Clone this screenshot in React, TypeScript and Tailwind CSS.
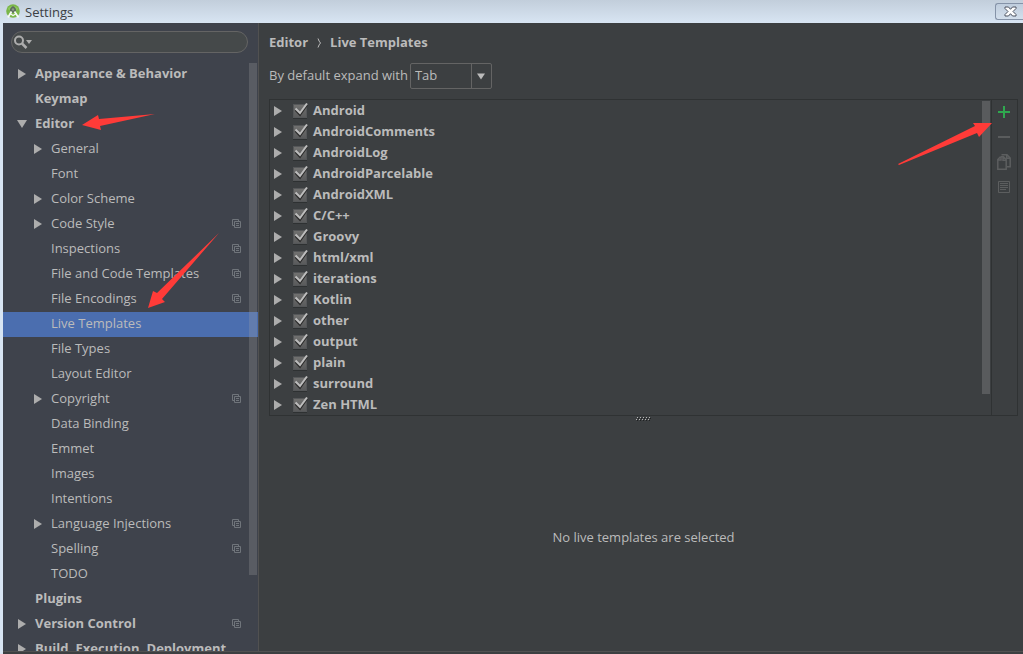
import React from "react";
import clsx from "clsx";

interface TreeItem {
  label: string;
  level: 0 | 1;
  arrow?: "open" | "closed";
  shared?: boolean;
  selected?: boolean;
}

const treeItems: TreeItem[] = [
  { label: "Appearance & Behavior", level: 0, arrow: "closed" },
  { label: "Keymap", level: 0 },
  { label: "Editor", level: 0, arrow: "open" },
  { label: "General", level: 1, arrow: "closed" },
  { label: "Font", level: 1 },
  { label: "Color Scheme", level: 1, arrow: "closed" },
  { label: "Code Style", level: 1, arrow: "closed", shared: true },
  { label: "Inspections", level: 1, shared: true },
  { label: "File and Code Templates", level: 1, shared: true },
  { label: "File Encodings", level: 1, shared: true },
  { label: "Live Templates", level: 1, selected: true },
  { label: "File Types", level: 1 },
  { label: "Layout Editor", level: 1 },
  { label: "Copyright", level: 1, arrow: "closed", shared: true },
  { label: "Data Binding", level: 1 },
  { label: "Emmet", level: 1 },
  { label: "Images", level: 1 },
  { label: "Intentions", level: 1 },
  { label: "Language Injections", level: 1, arrow: "closed", shared: true },
  { label: "Spelling", level: 1, shared: true },
  { label: "TODO", level: 1 },
  { label: "Plugins", level: 0 },
  { label: "Version Control", level: 0, arrow: "closed", shared: true },
  { label: "Build, Execution, Deployment", level: 0, arrow: "closed" },
];

const templateGroups = [
  "Android",
  "AndroidComments",
  "AndroidLog",
  "AndroidParcelable",
  "AndroidXML",
  "C/C++",
  "Groovy",
  "html/xml",
  "iterations",
  "Kotlin",
  "other",
  "output",
  "plain",
  "surround",
  "Zen HTML",
];

const Triangle = ({ open }: { open?: boolean }) => (
  <svg width="10" height="10" viewBox="0 0 10 10" fill="#adadad">
    {open ? <path d="M0 1h10L5 9z" /> : <path d="M1 0v10L9 5z" />}
  </svg>
);

const SharedIcon = () => (
  <svg width="9" height="9" viewBox="0 0 9 9" fill="none" stroke="#70757b">
    <path d="M2 6.5H0.5v-6h6V2M2.5 2.5h6v6h-6zM4 4.5h3M4 6.5h3" />
  </svg>
);

const StudioLogo = () => (
  <svg width="16" height="16" viewBox="0 0 16 16">
    <circle cx="7" cy="7" r="6.8" fill="#7ab648" />
    <path d="M1.500 5a6.500 6.500 0 0 1 11 0L7 8z" fill="#8cc85c" />
    <path d="M4 5l1.500-2L7 2l1.500 1L10 5v2L7 9 4 7z" fill="#5d6b60" />
    <circle cx="7" cy="5.500" r="1.200" fill="#8aa084" />
    <path d="M5.500 7.500L2 13.500M8.500 7.500l4 6" stroke="#f6faf5" strokeWidth="1.800" />
    <path d="M4 9.500l3 2 3.500-2" stroke="#f6faf5" strokeWidth="1.300" fill="none" />
  </svg>
);

const TitleBar = () => (
  <header className="flex h-[23px] shrink-0 items-center justify-between bg-linear-to-b from-[#c2cedb] to-[#d8e5f3] pl-[6px]">
    <div className="flex items-center gap-[3px]">
      <StudioLogo />
      <h1 className="text-[13px] leading-4 text-[#3b4045]">Settings</h1>
    </div>
    <button
      aria-label="Close"
      className="flex h-[17px] w-[28px] items-center justify-center rounded-l-[3px] border border-r-0 border-[#8593a8] bg-linear-to-b from-[#bfcddd] to-[#d3dfec] pl-[2px]"
    >
      <svg width="13" height="11" viewBox="0 0 13 11">
        <path
          d="M1 1h3.500l2 2.300L8.500 1H12v1.500L9 5.500l3 3V10H8.500l-2-2.300L4.500 10H1V8.500l3-3-3-3z"
          fill="#fff"
          stroke="#4b515f"
        />
      </svg>
    </button>
  </header>
);

const TreeRow = ({ item }: { item: TreeItem }) => (
  <li>
    <button
      className={clsx(
        "flex h-[25px] w-full items-center pr-[17px] pb-[2px] text-left whitespace-nowrap",
        item.level === 0 ? "pl-[14px] font-bold" : "pl-[30px]",
        item.selected && "bg-[#4b6eaf]"
      )}
    >
      <span className="w-[18px] shrink-0">
        {item.arrow && <Triangle open={item.arrow === "open"} />}
      </span>
      <span className="flex-1">{item.label}</span>
      {item.shared && <SharedIcon />}
    </button>
  </li>
);

const Sidebar = () => (
  <aside className="flex w-[256px] shrink-0 flex-col border-r border-[#515151] bg-[#3f434c]">
    <div className="mt-2 mr-[10px] mb-[9px] ml-2 flex h-[22px] shrink-0 items-center rounded-full border border-[#646464] bg-[#45494a] pl-[2px]">
      <svg width="20" height="14" viewBox="0 0 20 14">
        <circle cx="5" cy="5.500" r="4" fill="none" stroke="#adadad" strokeWidth="2" />
        <path d="M8 8.500l4.500 4.500" stroke="#adadad" strokeWidth="2.500" />
        <path d="M12 5h6l-3 4z" fill="#adadad" />
      </svg>
      <input
        type="text"
        aria-label="Search settings"
        className="min-w-0 flex-1 bg-transparent px-1 outline-none"
      />
    </div>
    <nav className="relative min-h-0 flex-1 overflow-hidden">
      <ul>
        {treeItems.map((item) => (
          <TreeRow key={item.label} item={item} />
        ))}
      </ul>
      {/* scrollbar thumb, see-through above the selected row */}
      <div className="absolute top-px right-[1px] h-[512px] w-2 bg-[#a6a6a6]/25" />
    </nav>
  </aside>
);

const TemplateRow = ({ name }: { name: string }) => (
  <li className="flex h-[21px] items-center pl-[3px]">
    <button aria-label={`Expand ${name}`} className="w-[20px]">
      <Triangle />
    </button>
    <label className="flex items-center gap-[4px] font-bold">
      <span className="relative h-4 w-4">
        <input
          type="checkbox"
          defaultChecked
          className="peer absolute top-px left-0 h-[14px] w-[14px] appearance-none border border-[#555759] bg-linear-to-b from-[#70706f] to-[#5a5b5c] shadow-[0_1px_0_#2e3132]"
        />
        <svg
          className="pointer-events-none absolute inset-0 hidden peer-checked:block"
          width="16"
          height="16"
          viewBox="0 0 16 16"
          fill="none"
        >
          <path d="M2.500 7l4.500 5 7-10" stroke="#2b2b2b" strokeWidth="2" />
          <path d="M2.500 5.500l4.500 4.500 7-9.500" stroke="#bdbdbd" strokeWidth="2" />
        </svg>
      </span>
      {name}
    </label>
  </li>
);

const toolButton = "flex h-[25px] w-full items-center justify-center pr-[2px] pb-[2px]";

const Toolbar = () => (
  <div className="flex w-[26px] shrink-0 flex-col border-l border-[#2f3233]">
    <button aria-label="Add" className={toolButton}>
      <svg width="12" height="12" viewBox="0 0 12 12" fill="#2fa84f">
        <path d="M5 0h2v5h5v2H7v5H5V7H0V5h5z" />
      </svg>
    </button>
    <button aria-label="Remove" className={toolButton}>
      <svg width="12" height="2" viewBox="0 0 12 2" fill="#5a5c5d">
        <path d="M0 0h12v2H0z" />
      </svg>
    </button>
    <button aria-label="Copy" className={toolButton}>
      <svg width="14" height="16" viewBox="0 0 14 16" fill="none" stroke="#5c5e5f" strokeWidth="1.500">
        <path d="M3.500 2.700L0.800 5.500v9.700h8.400V7M4 3v3H1" />
        <path d="M4.500 0.800H10l3.200 3.200v8.700H10M9.700 1v3.300H13" />
        <path d="M3.500 2.700H6.500L9.200 5.500V7M6 3v3.300h3" />
      </svg>
    </button>
    <button aria-label="Restore defaults" className={toolButton}>
      <svg width="12" height="12" viewBox="0 0 12 12" fill="none" stroke="#5c5e5f">
        <path d="M0.500 0.500h11v11h-11zM2 2.500h8M2 4.500h8M2 6.500h8M2 8.500h6" />
      </svg>
    </button>
  </div>
);

const TemplatesPanel = () => (
  <main className="flex min-w-0 flex-1 flex-col bg-[#3c3f41] pr-[5px] pl-[10px]">
    <div className="flex h-10 shrink-0 items-center gap-[7px] font-bold">
      <span>Editor</span>
      <svg width="8" height="10" viewBox="0 0 8 10" fill="none" stroke="#bbbbbb">
        <path d="M3 0.500q1 3 2.500 4.500Q4 6.500 3 9.500" />
      </svg>
      <span>Live Templates</span>
    </div>
    <div className="flex shrink-0 items-center gap-[2px]">
      <label htmlFor="expand-key">By default expand with</label>
      <div className="relative">
        <select
          id="expand-key"
          defaultValue="Tab"
          className="h-[26px] w-[82px] appearance-none rounded-[2px] border border-[#646464] bg-[#3c3f41] pl-1 outline-none"
        >
          <option>Tab</option>
          <option>Enter</option>
          <option>Space</option>
        </select>
        <div className="pointer-events-none absolute inset-y-px right-px flex w-5 items-center justify-center border-l border-[#646464]">
          <svg width="8" height="7" viewBox="0 0 8 7" fill="#bbbbbb">
            <path d="M0 0.500h8L4 6.500z" />
          </svg>
        </div>
      </div>
    </div>
    <section className="mt-[10px] flex shrink-0 border border-[#2f3233]">
      <ul className="min-w-0 flex-1">
        {templateGroups.map((name) => (
          <TemplateRow key={name} name={name} />
        ))}
      </ul>
      <div className="mt-px mr-px h-[293px] w-2 bg-[#595b5d]" />
      <Toolbar />
    </section>
    <div className="flex h-2 shrink-0 justify-center pt-px">
      <svg width="15" height="4" viewBox="0 0 15 4">
        {[0, 3, 6, 9, 12].map((x) => (
          <g key={x} fill="#b5b5b5">
            <path d={`M${x + 1} 0h1v1h-1z`} />
            <path d={`M${x} 2h1v1h-1z`} />
            <path d={`M${x + 2} 1h1v1h-1zM${x + 1} 3h1v1h-1z`} fill="#1f2122" />
          </g>
        ))}
      </svg>
    </div>
    <p className="flex flex-1 items-center justify-center">
      No live templates are selected
    </p>
  </main>
);

// Red pointers lying over the dialog
const Pointers = () => (
  <>
    <svg
      className="pointer-events-none absolute top-[110px] left-[80px]"
      width="145"
      height="200"
      viewBox="80 110 145 200"
      fill="#ff3b38"
    >
      <path d="M82 125L98 115L99 119L155 114L100 126L101 130z" />
      <path d="M148 308L153 291L157 293L219 233L162 299L165 302z" />
    </svg>
    <svg
      className="pointer-events-none absolute top-[120px] right-[30px]"
      width="98"
      height="48"
      viewBox="895 120 98 48"
      fill="#ff3b38"
    >
      <path d="M992 123L973 123L975 126L898 164L899 165L977 133L979 137z" />
    </svg>
  </>
);

const App = () => {
  return (
    <div className="relative flex h-screen flex-col overflow-hidden bg-[#d8e5f3] font-['Open_Sans',sans-serif] text-[13px] text-[#bbbbbb]">
      <TitleBar />
      <div className="ml-[3px] flex min-h-0 flex-1">
        <Sidebar />
        <TemplatesPanel />
      </div>
      <div className="ml-[3px] h-[3px] shrink-0 border-t border-[#515151] bg-[#3c3f41]" />
      <Pointers />
    </div>
  );
};

export default App;
